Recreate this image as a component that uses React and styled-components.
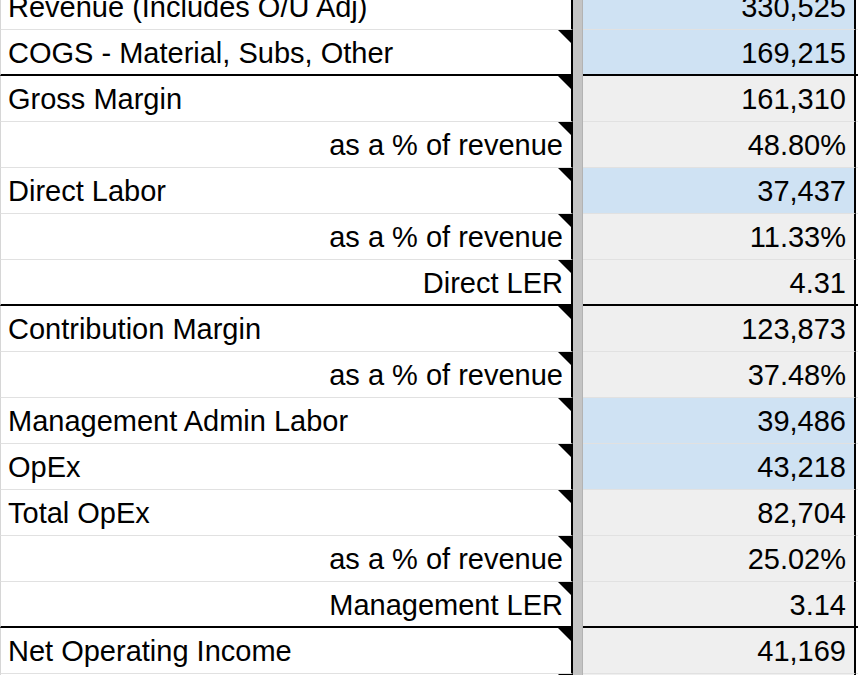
import React from "react";
import styled, { createGlobalStyle, css } from "styled-components";

const Global = createGlobalStyle`
  html, body {
    margin: 0;
    padding: 0;
    background: #ffffff;
    overflow: hidden;
  }
  body {
    font-family: "Liberation Sans", Arial, Helvetica, sans-serif;
    color: #000;
  }
`;

const GRID = "#e1e1e1";

const Sheet = styled.div`
  display: flex;
  flex-direction: column;
  margin-top: -16px;
  width: 858px;
`;

const Row = styled.div`
  display: flex;
  height: 46px;
`;

const cellBorder = css`
  box-sizing: border-box;
  height: 46px;
  border-bottom: ${(p) => (p.$thick ? "2px solid #000" : `1px solid ${GRID}`)};
`;

const LabelCell = styled.div`
  ${cellBorder}
  position: relative;
  width: 573px;
  flex: none;
  display: flex;
  align-items: center;
  justify-content: ${(p) => (p.$indent ? "flex-end" : "flex-start")};
  padding: 2px 8px 0 7px;
  border-left: 1px solid #d6d6d6;
  border-right: 2px solid #000;
  font-size: 29px;
  line-height: 33px;
  white-space: nowrap;

  &::after {
    content: "";
    position: absolute;
    top: 0;
    right: 0;
    width: 0;
    height: 0;
    border-top: 13px solid #000;
    border-left: 13px solid transparent;
  }
`;

const Divider = styled.div`
  box-sizing: border-box;
  width: 10px;
  flex: none;
  height: 46px;
  background: #c4c4c4;
  border-right: 1px solid #b3b3b3;
`;

const ValueCell = styled.div`
  ${cellBorder}
  width: 273px;
  flex: none;
  display: flex;
  align-items: center;
  justify-content: flex-end;
  padding: 2px 8px 0 8px;
  border-right: 2px solid #000;
  background: ${(p) => (p.$input ? "#cfe2f3" : "#efefef")};
  font-size: 29px;
  line-height: 33px;
  white-space: nowrap;
`;

const Filler = styled.div`
  ${cellBorder}
  flex: 1;
  background: #fff;
`;

const rows = [
  { label: "Revenue (Includes O/U Adj)", value: "330,525", input: true },
  { label: "COGS - Material, Subs, Other", value: "169,215", input: true, thick: true },
  { label: "Gross Margin", value: "161,310" },
  { label: "as a % of revenue", value: "48.80%", indent: true },
  { label: "Direct Labor", value: "37,437", input: true },
  { label: "as a % of revenue", value: "11.33%", indent: true },
  { label: "Direct LER", value: "4.31", indent: true, thick: true },
  { label: "Contribution Margin", value: "123,873" },
  { label: "as a % of revenue", value: "37.48%", indent: true },
  { label: "Management Admin Labor", value: "39,486", input: true },
  { label: "OpEx", value: "43,218", input: true },
  { label: "Total OpEx", value: "82,704" },
  { label: "as a % of revenue", value: "25.02%", indent: true },
  { label: "Management LER", value: "3.14", indent: true, thick: true },
  { label: "Net Operating Income", value: "41,169" },
  { label: "", value: "" },
];

export default function App() {
  return (
    <>
      <Global />
      <Sheet>
        {rows.map((r, i) => (
          <Row key={i}>
            <LabelCell $indent={r.indent} $thick={r.thick}>
              {r.label}
            </LabelCell>
            <Divider />
            <ValueCell $input={r.input} $thick={r.thick}>
              {r.value}
            </ValueCell>
            <Filler $thick={r.thick} />
          </Row>
        ))}
      </Sheet>
    </>
  );
}
